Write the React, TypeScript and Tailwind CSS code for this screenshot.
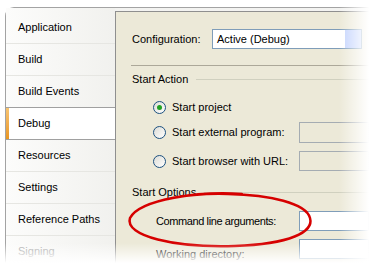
import { ReactNode } from 'react';

const tabs = ['Application', 'Build', 'Build Events', 'Debug', 'Resources', 'Settings', 'Reference Paths', 'Signing'];

const Radio = ({ checked }: { checked?: boolean }) => (
  <span className="w-[13px] h-[13px] rounded-full border border-[#1c5180] bg-gradient-to-br from-[#dcdcd6] to-white flex items-center justify-center shrink-0">
    {checked && <span className="w-[5px] h-[5px] rounded-full bg-[#21a121]" />}
  </span>
);

const GroupHeader = ({ children, className }: { children: ReactNode; className: string }) => (
  <div className={`flex items-center gap-[8px] pl-[16px] h-[14px] ${className}`}>
    <span>{children}</span>
    <span className="flex-1 h-px bg-[#d0d0bf]" />
  </div>
);

const App = () => {
  return (
    <div className="relative w-[369px] h-[263px] overflow-hidden bg-white text-[11px] text-black" style={{ fontFamily: '"Liberation Sans", Arial, sans-serif' }}>
      <div className="ml-[5px] mt-[7px] h-[256px] flex border-t border-l border-[#a3a3a3] rounded-tl-[9px] bg-[#f3f3f1]">
        {/* tab list */}
        <div className="w-[109px] pt-[4px] bg-gradient-to-r from-[#fcfcfb] to-[#f1f1ee]">
          {tabs.map((tab) => {
            const isDebug = tab === 'Debug';
            const beforeDebug = tab === 'Build Events';
            return (
              <div
                key={tab}
                className={`relative h-[32px] flex items-center pl-[12px] border-b ${
                  isDebug ? 'bg-white border-[#a0a0a0]' : beforeDebug ? 'border-[#a0a0a0]' : 'border-[#e6e6e2]'
                } ${tab === 'Signing' ? 'text-[#a6a6a6]' : ''}`}
              >
                {isDebug && <span className="absolute left-0 top-0 bottom-0 w-[3px] bg-gradient-to-b from-[#f8c470] to-[#e8961e]" />}
                {tab}
              </div>
            );
          })}
        </div>

        {/* property page */}
        <div className="flex-1 mt-[3px] border-t border-l border-[#8f8f8f] bg-[#ece9d8] flex flex-col">
          <div className="mt-[17px] h-[20px] flex items-center pl-[16px]">
            <span className="w-[80px]">Configuration:</span>
            <div className="w-[150px] h-[20px] border border-[#7f9db9] bg-white flex items-center">
              <span className="flex-1 pl-[4px]">Active (Debug)</span>
              <span className="w-[16px] h-[18px] bg-[#c3d3fd]" />
            </div>
          </div>

          <div className="mt-[16px] ml-[15px] h-px bg-[#aca899]" />

          <GroupHeader className="mt-[6px]">Start Action</GroupHeader>

          <div className="mt-[11px] h-[20px] flex items-center">
            <div className="w-[183px] pl-[37px] flex items-center gap-[6px]">
              <Radio checked />
              <span>Start project</span>
            </div>
          </div>

          <div className="mt-[5px] h-[21px] flex items-center">
            <div className="w-[183px] pl-[37px] flex items-center gap-[6px]">
              <Radio />
              <span>Start external program:</span>
            </div>
            <div className="flex-1 h-[21px] border border-[#a5acb2] bg-[#ece9d8]" />
          </div>

          <div className="mt-[8px] h-[20px] flex items-center">
            <div className="w-[183px] pl-[37px] flex items-center gap-[6px]">
              <Radio />
              <span>Start browser with URL:</span>
            </div>
            <div className="flex-1 h-[20px] border border-[#a5acb2] bg-[#ece9d8]" />
          </div>

          <GroupHeader className="mt-[14px]">Start Options</GroupHeader>

          <div className="mt-[12px] h-[20px] flex items-center">
            <span className="w-[183px] pl-[40px] tracking-[-0.4px]">Command line arguments:</span>
            <div className="flex-1 h-[20px] border border-[#7f9db9] bg-white" />
          </div>

          <div className="mt-[8px] h-[20px] flex items-center">
            <span className="w-[183px] pl-[40px] pt-[10px]">Working directory:</span>
            <div className="flex-1 h-[20px] border border-[#7f9db9] bg-white" />
          </div>
        </div>
      </div>

      {/* red marker */}
      <svg className="absolute inset-0 pointer-events-none" width="369" height="263" viewBox="0 0 369 263">
        <path
          d="M242 194 C200 191 140 199 130 218 C124 236 175 248 235 246 C290 244 314 232 310 218 C306 203 270 195 228 194 C205 193 180 196 168 199"
          fill="none"
          stroke="#d60000"
          strokeWidth="2.5"
          strokeLinecap="round"
        />
      </svg>

      {/* screenshot fade */}
      <div className="absolute top-0 right-0 bottom-0 w-[30px] bg-gradient-to-r from-white/0 to-white pointer-events-none" />
      <div className="absolute left-0 right-0 bottom-0 h-[20px] bg-gradient-to-b from-white/0 to-white pointer-events-none" />
    </div>
  );
};

export default App;
